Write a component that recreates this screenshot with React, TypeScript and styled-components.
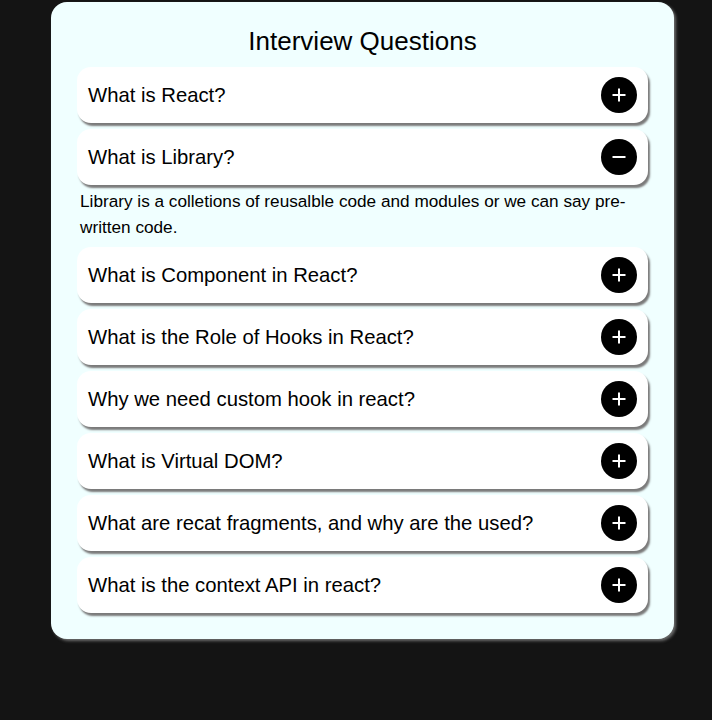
import { useState } from "react";
import styled, { createGlobalStyle } from "styled-components";

const GlobalStyle = createGlobalStyle`
  html, body {
    margin: 0;
    padding: 0;
    background-color: #141414;
    font-family: "Liberation Sans", Arial, sans-serif;
  }
`;

const questions = [
  { q: "What is React?", a: "React is a JavaScript library for building user interfaces." },
  {
    q: "What is Library?",
    a: "Library is a colletions of reusalble code and modules or we can say pre-written code.",
  },
  { q: "What is Component in React?", a: "A component is a reusable piece of UI." },
  { q: "What is the Role of Hooks in React?", a: "Hooks let function components use state and lifecycle." },
  { q: "Why we need custom hook in react?", a: "To reuse stateful logic between components." },
  { q: "What is Virtual DOM?", a: "A lightweight copy of the real DOM kept in memory." },
  { q: "What are recat fragments, and why are the used?", a: "Fragments group children without adding extra nodes." },
  { q: "What is the context API in react?", a: "Context passes data through the tree without props." },
];

const Page = styled.div`
  min-height: 720px;
  padding: 2px 0 0 51px;
  box-sizing: border-box;
`;

const Card = styled.div`
  width: 623px;
  box-sizing: border-box;
  background-color: #f0ffff;
  border-radius: 16px;
  padding: 24px 26px 26px;
  box-shadow: 2px 2px 3px #6b6b6b;
`;

const Title = styled.h1`
  margin: 0 0 11px;
  text-align: center;
  font-size: 26px;
  font-weight: 400;
  line-height: 30px;
  color: #000;
`;

const List = styled.div`
  display: flex;
  flex-direction: column;
  gap: 6px;
`;

const Item = styled.div`
  display: flex;
  align-items: center;
  justify-content: space-between;
  height: 56px;
  box-sizing: border-box;
  padding: 0 11px;
  background-color: #fff;
  border-radius: 14px;
  box-shadow: 2px 3px 2px #7a7a7a;
`;

const Question = styled.span`
  font-size: 20.3px;
  color: #000;
`;

const ToggleButton = styled.button`
  width: 36px;
  height: 36px;
  border-radius: 50%;
  border: none;
  padding: 0;
  background-color: #000;
  display: flex;
  align-items: center;
  justify-content: center;
  cursor: pointer;
`;

const Answer = styled.p`
  margin: 0;
  padding: 3px 10px 1px 3px;
  font-size: 17.2px;
  line-height: 26px;
  color: #000;
`;

function Sign({ open }: { open: boolean }) {
  return (
    <svg width="16" height="16" viewBox="0 0 16 16">
      <line x1="1.5" y1="8" x2="14.5" y2="8" stroke="#fff" strokeWidth="2" />
      {!open && <line x1="8" y1="1.5" x2="8" y2="14.5" stroke="#fff" strokeWidth="2" />}
    </svg>
  );
}

export default function App() {
  const [openIndex, setOpenIndex] = useState<number | null>(1);

  return (
    <Page>
      <GlobalStyle />
      <Card>
        <Title>Interview Questions</Title>
        <List>
          {questions.map((item, index) => (
            <div key={index}>
              <Item>
                <Question>{item.q}</Question>
                <ToggleButton
                  onClick={() => setOpenIndex(openIndex === index ? null : index)}
                >
                  <Sign open={openIndex === index} />
                </ToggleButton>
              </Item>
              {openIndex === index && <Answer>{item.a}</Answer>}
            </div>
          ))}
        </List>
      </Card>
    </Page>
  );
}
